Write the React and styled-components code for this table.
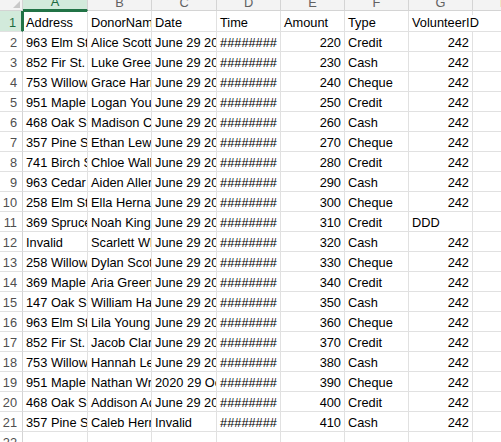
import React from 'react'
import styled, { createGlobalStyle } from 'styled-components';

const GlobalStyle = createGlobalStyle`
  html, body {
    margin: 0;
    padding: 0;
    background: #ffffff;
    overflow: hidden;
  }
`

const columns = ['A', 'B', 'C', 'D', 'E', 'F', 'G', 'H'];
const HASH = '########';

const rows = [
    ['Address', 'DonorName', 'Date', 'Time', 'Amount', 'Type', 'VolunteerID'],
    ['963 Elm St.', 'Alice Scott', 'June 29 2020', HASH, 220, 'Credit', 242],
    ['852 Fir St.', 'Luke Green', 'June 29 2020', HASH, 230, 'Cash', 242],
    ['753 Willow Ave.', 'Grace Harris', 'June 29 2020', HASH, 240, 'Cheque', 242],
    ['951 Maple Rd.', 'Logan Young', 'June 29 2020', HASH, 250, 'Credit', 242],
    ['468 Oak St.', 'Madison Clark', 'June 29 2020', HASH, 260, 'Cash', 242],
    ['357 Pine St.', 'Ethan Lewis', 'June 29 2020', HASH, 270, 'Cheque', 242],
    ['741 Birch St.', 'Chloe Walker', 'June 29 2020', HASH, 280, 'Credit', 242],
    ['963 Cedar Ln.', 'Aiden Allen', 'June 29 2020', HASH, 290, 'Cash', 242],
    ['258 Elm St.', 'Ella Hernandez', 'June 29 2020', HASH, 300, 'Cheque', 242],
    ['369 Spruce Ave.', 'Noah King', 'June 29 2020', HASH, 310, 'Credit', 'DDD'],
    ['Invalid', 'Scarlett White', 'June 29 2020', HASH, 320, 'Cash', 242],
    ['258 Willow Ave.', 'Dylan Scott', 'June 29 2020', HASH, 330, 'Cheque', 242],
    ['369 Maple Rd.', 'Aria Green', 'June 29 2020', HASH, 340, 'Credit', 242],
    ['147 Oak St.', 'William Hall', 'June 29 2020', HASH, 350, 'Cash', 242],
    ['963 Elm St.', 'Lila Young', 'June 29 2020', HASH, 360, 'Cheque', 242],
    ['852 Fir St.', 'Jacob Clark', 'June 29 2020', HASH, 370, 'Credit', 242],
    ['753 Willow Ave.', 'Hannah Lee', 'June 29 2020', HASH, 380, 'Cash', 242],
    ['951 Maple Rd.', 'Nathan Wright', '2020 29 October', HASH, 390, 'Cheque', 242],
    ['468 Oak St.', 'Addison Adams', 'June 29 2020', HASH, 400, 'Credit', 242],
    ['357 Pine St.', 'Caleb Hernandez', 'Invalid', HASH, 410, 'Cash', 242],
    ['', '', '', '', '', '', ''],
];

const Viewport = styled.div`
  width: 501px;
  height: 442px;
  overflow: hidden;
`

const Sheet = styled.div`
  display: grid;
  grid-template-columns: 23px 65px 64px 65px 64px 64px 64px 64px 64px;
  grid-auto-rows: 20px;
  grid-template-rows: 11px 21px;
  font-family: "Liberation Sans", Arial, sans-serif;
  font-size: 12.8px;
  color: #000000;
  width: max-content;
`

const Corner = styled.div`
  position: relative;
  background: #f3f3f3;
  border-right: 1px solid #d4d4d4;
  border-bottom: 1px solid #d4d4d4;

  &::after {
    content: '';
    position: absolute;
    right: 2px;
    bottom: 2px;
    border-left: 7px solid transparent;
    border-bottom: 7px solid #c8c8c8;
  }
`

const ColHead = styled.div`
  display: flex;
  align-items: flex-end;
  justify-content: center;
  overflow: hidden;
  line-height: 14px;
  box-sizing: border-box;
  background: ${p => (p.$active ? '#d2eadb' : '#f3f3f3')};
  color: ${p => (p.$active ? '#1b6b3f' : '#616161')};
  border-right: 1px solid #d4d4d4;
  border-bottom: ${p => (p.$active ? '2px solid #217346' : '1px solid #d4d4d4')};
`

const RowHead = styled.div`
  display: flex;
  align-items: flex-end;
  justify-content: flex-end;
  padding-right: 5px;
  overflow: hidden;
  line-height: 16px;
  box-sizing: border-box;
  background: ${p => (p.$active ? '#d2eadb' : '#ffffff')};
  color: ${p => (p.$active ? '#1b6b3f' : '#4f4f4f')};
  border-right: ${p => (p.$active ? '2px solid #217346' : '1px solid #d4d4d4')};
  border-bottom: 1px solid #e1e1e1;
`

const Cell = styled.div`
  position: relative;
  display: flex;
  align-items: flex-end;
  justify-content: ${p => (p.$num ? 'flex-end' : p.$center ? 'center' : 'flex-start')};
  padding: ${p => (p.$num ? '0 3px 0 0' : p.$center ? '0' : '0 0 0 3px')};
  overflow: ${p => (p.$spill ? 'visible' : 'hidden')};
  white-space: nowrap;
  line-height: 16px;
  box-sizing: border-box;
  border-right: 1px solid #e1e1e1;
  border-bottom: 1px solid #e1e1e1;
  z-index: ${p => (p.$spill ? 1 : 0)};

  ${p => p.$selected && `
    &::after {
      content: '';
      position: absolute;
      left: -1px;
      top: -1px;
      right: -2px;
      bottom: -2px;
      border: 2px solid #217346;
      pointer-events: none;
    }
  `}
`

const Spill = styled.span`
  background: #ffffff;
`

const App = () => {
    return (
        <>
            <GlobalStyle />
            <Viewport>
                <Sheet>
                    <Corner />
                    {columns.map((c, i) => (
                        <ColHead key={c} $active={i === 0}>{c}</ColHead>
                    ))}

                    {rows.map((row, r) => (
                        <React.Fragment key={r}>
                            <RowHead $active={r === 0}>{r + 1}</RowHead>
                            {row.map((value, c) => {
                                const isNum = typeof value === 'number';
                                const isHash = value === HASH;
                                const spill = r === 0 && c === 6;
                                return (
                                    <Cell
                                        key={c}
                                        $num={isNum}
                                        $center={isHash}
                                        $spill={spill}
                                        $selected={r === 0 && c === 0}
                                    >
                                        {spill ? <Spill>{value}</Spill> : value}
                                    </Cell>
                                );
                            })}
                            <Cell />
                        </React.Fragment>
                    ))}
                </Sheet>
            </Viewport>
        </>
    )
}

export default App
